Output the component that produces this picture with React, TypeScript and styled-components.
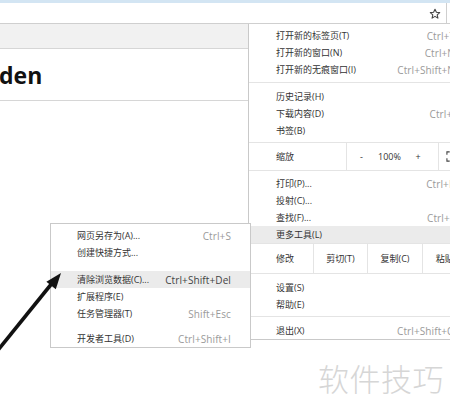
import React from 'react';
import styled, { createGlobalStyle } from 'styled-components';

const GlobalStyle = createGlobalStyle`
  html, body {
    margin: 0;
    padding: 0;
    background: #fff;
  }
  body {
    width: 450px;
    height: 413px;
    overflow: hidden;
    font-family: 'Open Sans', 'Noto Sans CJK SC', sans-serif;
  }
`;

type MenuItem = { label: string; shortcut?: string; active?: boolean };

const group1: MenuItem[] = [
  { label: '打开新的标签页(T)', shortcut: 'Ctrl+T' },
  { label: '打开新的窗口(N)', shortcut: 'Ctrl+N' },
  { label: '打开新的无痕窗口(I)', shortcut: 'Ctrl+Shift+N' },
];
const group2: MenuItem[] = [
  { label: '历史记录(H)' },
  { label: '下载内容(D)', shortcut: 'Ctrl+J' },
  { label: '书签(B)' },
];
const group3: MenuItem[] = [
  { label: '打印(P)...', shortcut: 'Ctrl+P' },
  { label: '投射(C)...' },
  { label: '查找(F)...', shortcut: 'Ctrl+F' },
  { label: '更多工具(L)', active: true },
];
const group4: MenuItem[] = [{ label: '设置(S)' }, { label: '帮助(E)' }];

const subGroup1: MenuItem[] = [
  { label: '网页另存为(A)...', shortcut: 'Ctrl+S' },
  { label: '创建快捷方式...' },
];
const subGroup2: MenuItem[] = [
  { label: '清除浏览数据(C)...', shortcut: 'Ctrl+Shift+Del', active: true },
  { label: '扩展程序(E)' },
  { label: '任务管理器(T)', shortcut: 'Shift+Esc' },
];

const App = () => {
  const renderItems = (items: MenuItem[], sub?: boolean) =>
    items.map(item => (
      <Item key={item.label} $active={item.active} $sub={sub}>
        <span>{item.label}</span>
        {item.shortcut && <Shortcut $strong={item.active}>{item.shortcut}</Shortcut>}
      </Item>
    ));

  return (
    <>
      <GlobalStyle />
      <Page>
        <TopStrip />
        <AddressBar>
          <Omnibox>
            <StarIcon viewBox='0 0 12 12'>
              <path
                d='M6 1.2 L7.4 4.3 L10.7 4.6 L8.2 6.8 L8.9 10.1 L6 8.4 L3.1 10.1 L3.8 6.8 L1.3 4.6 L4.6 4.3 Z'
                fill='none'
                stroke='#444'
                strokeWidth='1.1'
                strokeLinejoin='round'
              />
            </StarIcon>
          </Omnibox>
        </AddressBar>
        <TabStrip />
        <Heading>den</Heading>

        <MainMenu>
          <Group $top={3}>{renderItems(group1)}</Group>
          <Separator $before={4} $after={5} />
          <Group>{renderItems(group2)}</Group>
          <ControlRow $mt={3} $height={27}>
            <RowLabel $width={97}>缩放</RowLabel>
            <Cell $width={30} $border>-</Cell>
            <Cell $width={27}>100%</Cell>
            <Cell $width={30}>+</Cell>
            <Cell $width={5} />
            <Cell $width={40} $border $left>
              <FullIcon viewBox='0 0 12 12'>
                <path
                  d='M1 4 V1 H4 M8 1 H11 V4 M11 8 V11 H8 M4 11 H1 V8'
                  fill='none'
                  stroke='#444'
                  strokeWidth='1.2'
                />
              </FullIcon>
            </Cell>
          </ControlRow>
          <Group $top={4}>{renderItems(group3)}</Group>
          <ControlRow $height={29}>
            <RowLabel $width={64}>修改</RowLabel>
            <Cell $width={54} $border>剪切(T)</Cell>
            <Cell $width={55} $border>复制(C)</Cell>
            <Cell $width={55} $border>粘贴(P)</Cell>
          </ControlRow>
          <Group $top={5}>{renderItems(group4)}</Group>
          <Separator $before={3} $after={5} />
          <Group>
            {renderItems([{ label: '退出(X)', shortcut: 'Ctrl+Shift+Q' }])}
          </Group>
        </MainMenu>

        <SubMenu>
          <Group $top={3}>{renderItems(subGroup1, true)}</Group>
          <Separator $before={4} $after={6} />
          <Group>{renderItems(subGroup2, true)}</Group>
          <Separator $before={4} $after={4} />
          <Group>
            {renderItems([{ label: '开发者工具(D)', shortcut: 'Ctrl+Shift+I' }], true)}
          </Group>
        </SubMenu>

        <Arrow viewBox='0 0 70 90'>
          <line x1='-2' y1='85' x2='53' y2='17' stroke='#111' strokeWidth='3.6' />
          <polygon points='61,8 55.8,24.2 46.4,16.8' fill='#111' />
        </Arrow>

        <Watermark>软件技巧</Watermark>
      </Page>
    </>
  );
};

const Page = styled.div`
  position: relative;
  width: 450px;
  height: 413px;
  overflow: hidden;
  background: #fff;
`;

const TopStrip = styled.div`
  height: 3px;
  background: #d3e5f3;
`;

const AddressBar = styled.div`
  height: 20px;
  border-bottom: 1px solid #cfcfcf;
  display: flex;
`;

const Omnibox = styled.div`
  width: 447px;
  border-right: 1px solid #cfcfcf;
  display: flex;
  align-items: center;
  justify-content: flex-end;
  padding-right: 5px;
  box-sizing: border-box;
`;

const StarIcon = styled.svg`
  width: 12px;
  height: 12px;
  margin-top: 2px;
`;

const TabStrip = styled.div`
  height: 24px;
  background: #f1f1f1;
  border-bottom: 1px solid #d6d6d6;
`;

const Heading = styled.div`
  height: 51px;
  border-bottom: 1px solid #d6d6d6;
  display: flex;
  align-items: center;
  margin-left: -1px;
  font-family: 'Open Sans', 'Liberation Sans', sans-serif;
  font-weight: 700;
  font-size: 23px;
  color: #111;
`;

const MainMenu = styled.div`
  position: absolute;
  left: 248px;
  top: 24px;
  width: 230px;
  height: 316px;
  box-sizing: border-box;
  background: #fff;
  border-left: 1px solid #c9c9c9;
  border-bottom: 1px solid #c9c9c9;
  display: flex;
  flex-direction: column;
`;

const SubMenu = styled.div`
  position: absolute;
  left: 50px;
  top: 223px;
  width: 201px;
  height: 125px;
  box-sizing: border-box;
  background: #fff;
  border: 1px solid #c9c9c9;
  display: flex;
  flex-direction: column;
`;

const Group = styled.div<{ $top?: number }>`
  display: flex;
  flex-direction: column;
  padding-top: ${p => p.$top || 0}px;
`;

const Item = styled.div<{ $active?: boolean; $sub?: boolean }>`
  height: 17px;
  display: flex;
  align-items: center;
  justify-content: space-between;
  padding: ${p => (p.$sub ? '0 19px 0 26px' : '0 23px 0 27px')};
  background: ${p => (p.$active ? '#ebebeb' : 'transparent')};
  font-size: 9px;
  color: #333;
  white-space: nowrap;
`;

const Shortcut = styled.span<{ $strong?: boolean }>`
  font-size: 10px;
  letter-spacing: 0.1px;
  color: ${p => (p.$strong ? '#444' : '#9a9a9a')};
`;

const Separator = styled.div<{ $before: number; $after: number }>`
  height: 1px;
  background: #e4e4e4;
  margin: ${p => p.$before}px 0 ${p => p.$after}px;
`;

const ControlRow = styled.div<{ $mt?: number; $height: number }>`
  display: flex;
  height: ${p => p.$height}px;
  margin-top: ${p => p.$mt || 0}px;
  border-top: 1px solid #e4e4e4;
  border-bottom: 1px solid #e4e4e4;
  font-size: 9px;
  color: #333;
`;

const RowLabel = styled.div<{ $width: number }>`
  width: ${p => p.$width}px;
  flex-shrink: 0;
  display: flex;
  align-items: center;
  padding-left: 27px;
  box-sizing: border-box;
`;

const Cell = styled.div<{ $width: number; $border?: boolean; $left?: boolean }>`
  width: ${p => p.$width}px;
  flex-shrink: 0;
  display: flex;
  align-items: center;
  justify-content: ${p => (p.$left ? 'flex-start' : 'center')};
  padding-left: ${p => (p.$left ? '7px' : '0')};
  box-sizing: border-box;
  border-left: ${p => (p.$border ? '1px solid #e4e4e4' : 'none')};
  white-space: nowrap;
`;

const FullIcon = styled.svg`
  width: 11px;
  height: 11px;
`;

const Arrow = styled.svg`
  position: absolute;
  left: 0;
  top: 265px;
  width: 70px;
  height: 90px;
`;

const Watermark = styled.div`
  position: absolute;
  left: 318px;
  top: 355px;
  font-family: 'Noto Sans CJK SC', sans-serif;
  font-size: 31px;
  font-weight: 300;
  letter-spacing: 0.5px;
  color: #d6d6d6;
  white-space: nowrap;
`;

export default App;
